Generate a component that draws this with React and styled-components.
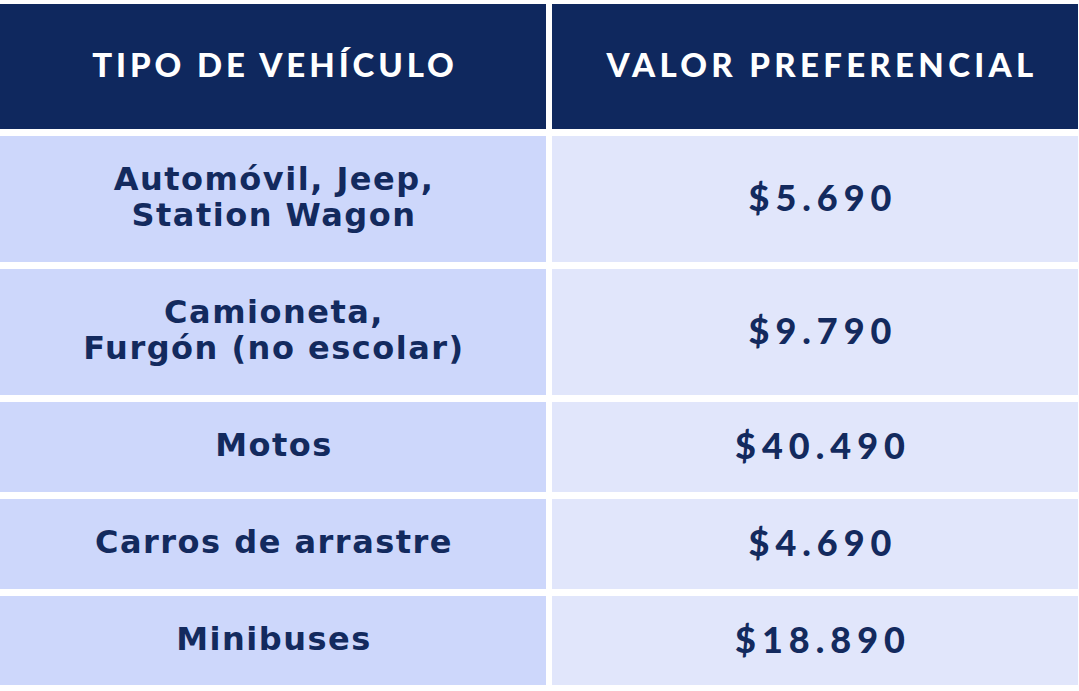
import React from 'react';
import styled, { createGlobalStyle } from 'styled-components';

const GlobalStyle = createGlobalStyle`
  html, body {
    margin: 0;
    padding: 0;
    background: #ffffff;
  }
  body {
    font-family: 'DejaVu Sans', 'Liberation Sans', sans-serif;
  }
`;

const Page = styled.div`
  width: 1079px;
  height: 691px;
  padding: 4px 1px 0 0;
  box-sizing: border-box;
  background: #ffffff;
`;

const Table = styled.div`
  display: grid;
  grid-template-columns: 546px 1fr;
  grid-template-rows: 125px 126px 126px 90px 90px 89px;
  column-gap: 6px;
  row-gap: 7px;
`;

const HeadCell = styled.div`
  display: flex;
  align-items: center;
  justify-content: center;
  padding: 0 0 6px ${props => (props.value ? '14px' : '4px')};
  background: #0f285e;
  color: #ffffff;
  font-family: 'Lato', 'DejaVu Sans', sans-serif;
  font-weight: 900;
  font-size: 33px;
  letter-spacing: ${props => (props.value ? '4.3px' : '3.9px')};
  text-transform: uppercase;
`;

const Cell = styled.div`
  display: flex;
  align-items: center;
  justify-content: center;
  text-align: center;
  padding-left: ${props => (props.value ? '16px' : '2px')};
  padding-bottom: 4px;
  background: ${props => (props.value ? '#e1e6fb' : '#cdd7fb')};
  color: #132a5e;
  font-family: ${props => (props.value ? "'Lato', sans-serif" : "'DejaVu Sans', sans-serif")};
  font-weight: ${props => (props.value ? 900 : 700)};
  font-size: ${props => (props.value ? '36px' : '32px')};
  letter-spacing: ${props => (props.value ? '6px' : '1.5px')};
  line-height: 36px;
`;

const rows = [
  { tipo: ['Automóvil, Jeep,', 'Station Wagon'], valor: '$5.690' },
  { tipo: ['Camioneta,', 'Furgón (no escolar)'], valor: '$9.790' },
  { tipo: ['Motos'], valor: '$40.490' },
  { tipo: ['Carros de arrastre'], valor: '$4.690' },
  { tipo: ['Minibuses'], valor: '$18.890' },
];

export default function App() {
  return (
    <>
      <GlobalStyle />
      <Page>
        <Table>
          <HeadCell>Tipo de vehículo</HeadCell>
          <HeadCell value>Valor preferencial</HeadCell>
          {rows.map(row => (
            <React.Fragment key={row.valor}>
              <Cell>
                <div>
                  {row.tipo.map(line => (
                    <div key={line}>{line}</div>
                  ))}
                </div>
              </Cell>
              <Cell value>{row.valor}</Cell>
            </React.Fragment>
          ))}
        </Table>
      </Page>
    </>
  );
}
